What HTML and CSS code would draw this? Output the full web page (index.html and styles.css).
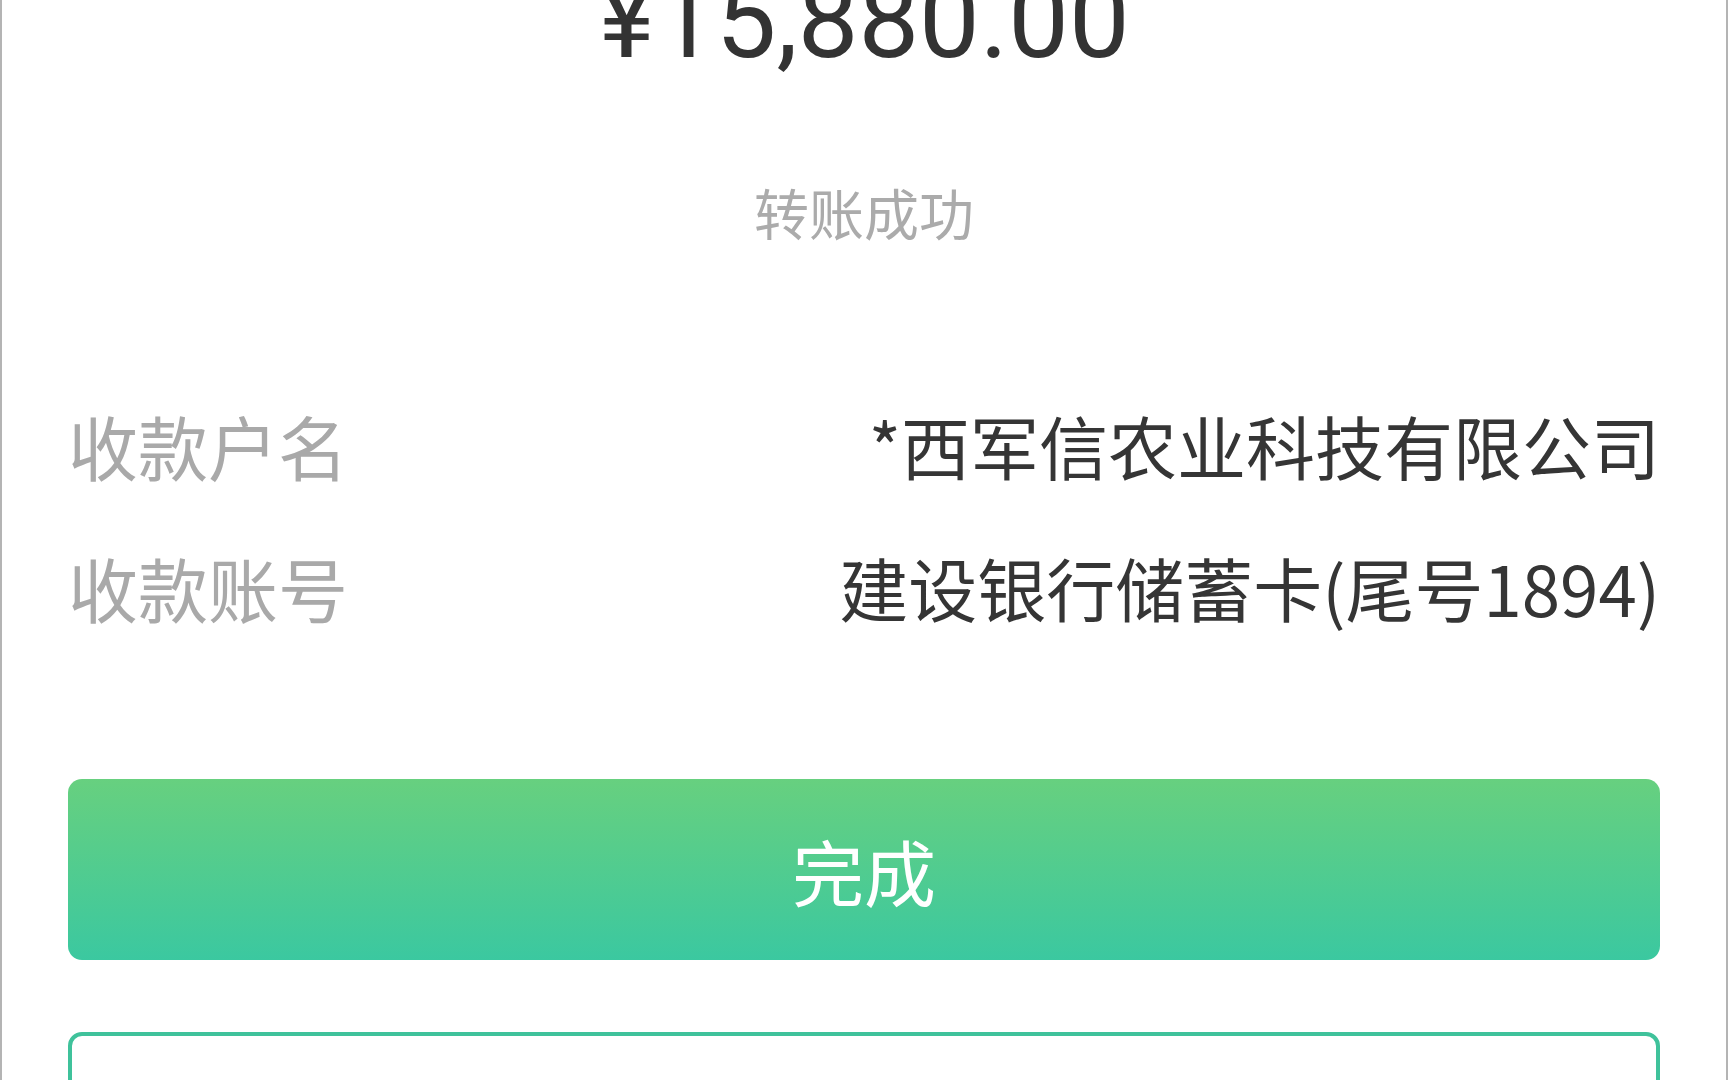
FILE: index.html
```html
<!DOCTYPE html>
<html lang="zh-CN">
<head>
    <meta charset="UTF-8">
    <meta name="viewport" content="width=device-width, initial-scale=1.0">
    <title>转账成功</title>
    <link rel="stylesheet" href="styles.css">
</head>
<body>
    <div class="screen">
        <div class="amount">¥15,880.00</div>
        <div class="status">转账成功</div>

        <div class="details">
            <div class="row">
                <span class="label">收款户名</span>
                <span class="value">*西军信农业科技有限公司</span>
            </div>
            <div class="row">
                <span class="label">收款账号</span>
                <span class="value">建设银行储蓄卡(尾号1894)</span>
            </div>
        </div>

        <div class="actions">
            <button class="btn btn-primary">完成</button>
            <button class="btn btn-outline"></button>
        </div>
    </div>
</body>
</html>
```

FILE: styles.css
```css
html, body {
    margin: 0;
    padding: 0;
    background-color: #ffffff;
}
body {
    font-family: "Noto Sans CJK SC", "Noto Sans", sans-serif;
}
.screen {
    box-sizing: border-box;
    height: 1080px;
    overflow: hidden;
    border-left: 2px solid #b4b4b4;
    border-right: 2px solid #b4b4b4;
    padding: 0 66px;
    display: flex;
    flex-direction: column;
}
.amount {
    font-family: Roboto, "Noto Sans", sans-serif;
    font-size: 108px;
    line-height: 108px;
    color: #333333;
    text-align: center;
    margin-top: -34px;
}
.status {
    font-size: 55px;
    line-height: 55px;
    color: #ababab;
    text-align: center;
    margin-top: 110px;
}
.details {
    margin-top: 135px;
    display: flex;
    flex-direction: column;
}
.row {
    display: flex;
    justify-content: space-between;
    align-items: center;
    height: 142px;
    font-size: 69px;
    line-height: 69px;
}
.label {
    color: #a9a9a9;
    font-size: 70px;
}
.value {
    color: #353535;
}
.actions {
    margin-top: 121px;
    display: flex;
    flex-direction: column;
    gap: 72px;
}
.btn {
    box-sizing: border-box;
    width: 100%;
    height: 181px;
    border-radius: 14px;
    font-family: "Noto Sans CJK SC", sans-serif;
    font-size: 72px;
    flex-shrink: 0;
}
.btn-primary {
    border: none;
    color: #ffffff;
    background: linear-gradient(to bottom, #67d07f, #3bc8a0);
}
.btn-outline {
    border: 4px solid #3fc29b;
    background-color: #ffffff;
}
```
